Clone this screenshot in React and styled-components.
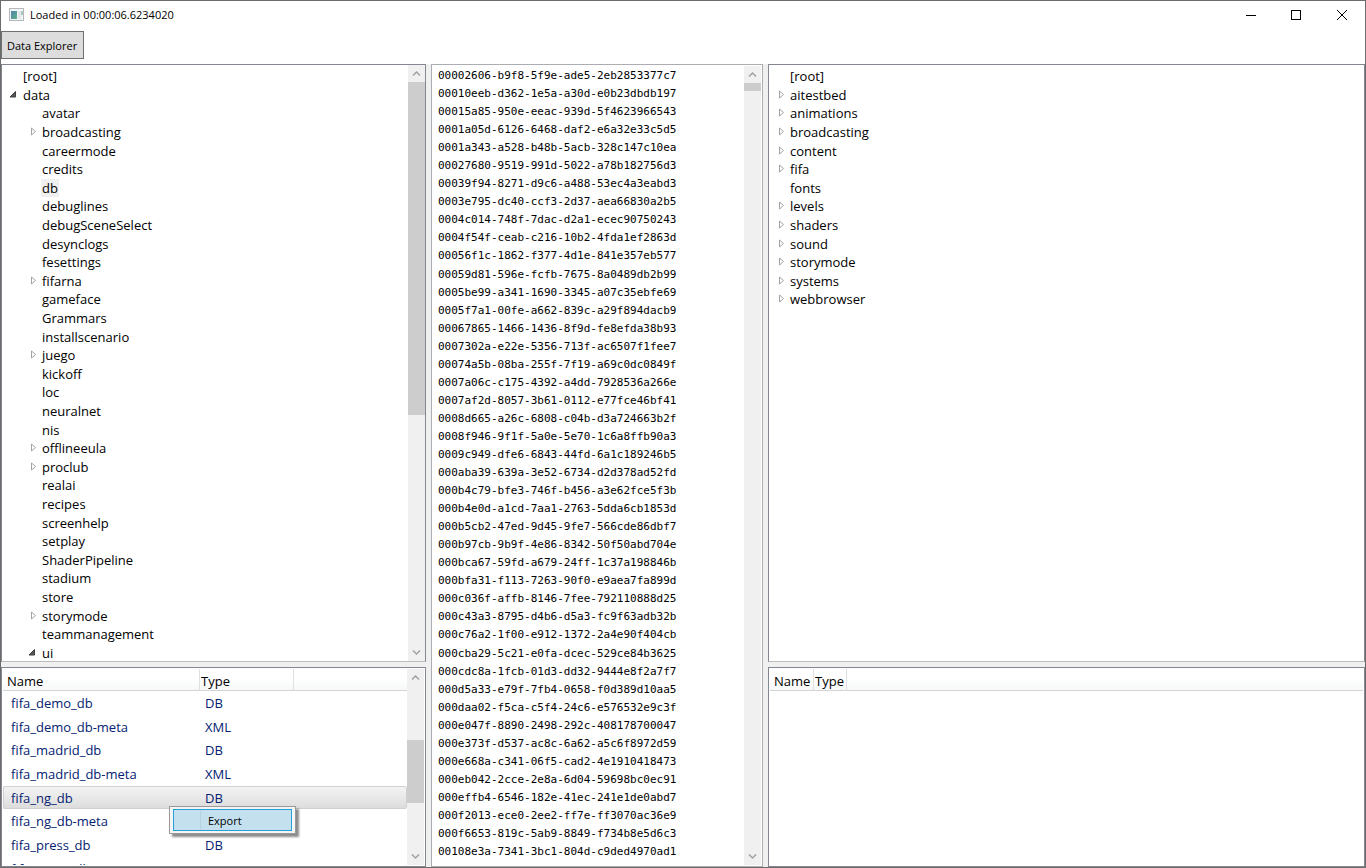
import React from "react";

import styled, { createGlobalStyle } from "styled-components";

const GlobalStyle = createGlobalStyle`
  * {
    box-sizing: border-box;
  }

  body {
    margin: 0;
    color: #000;
    background-color: #fff;
    font-family: "Open Sans", "Noto Sans", sans-serif;
    font-size: 13px;
    line-height: 18px;
  }

  button {
    margin: 0;
    padding: 0;
    border: none;
    background: none;
    color: inherit;
    font-family: inherit;
  }
`;

const Window = styled.div`
  display: flex;
  flex-direction: column;
  height: 100vh;
  border: 1px solid #6b6b6b;
  background-color: #fff;
`;

const TitleBar = styled.header`
  display: flex;
  align-items: center;
  flex: none;
  height: 28px;
  padding-left: 8px;

  svg {
    display: block;
  }

  h1 {
    flex: 1;
    margin: 0 0 0 5px;
    font-size: 11px;
    font-weight: 400;
  }
`;

const CaptionButton = styled.button`
  display: flex;
  align-items: center;
  justify-content: center;
  width: 46px;
  height: 28px;

  :hover {
    background-color: #e5e5e5;
  }
`;

const Toolbar = styled.div`
  flex: none;
  height: 35px;
  padding-top: 2px;
`;

const ToolButton = styled.button`
  display: block;
  height: 28px;
  padding: 1px 6px 0 5px;
  border: 1px solid #707070;
  background-color: #ddd;
  font-size: 11px;
  line-height: 18px;
`;

const Workspace = styled.main`
  display: grid;
  grid-template-columns: 425fr 332fr 597fr;
  grid-template-rows: 598fr 200fr;
  gap: 5px;
  flex: 1;
  min-height: 0;
  background-color: #f0f0f0;
`;

const Panel = styled.section`
  position: relative;
  display: flex;
  min-width: 0;
  min-height: 0;
  overflow: hidden;
  padding: ${props => (props.$inset ? "1px" : "0")};
  border: 1px solid ${props => (props.$light ? "#abadb3" : "#828790")};
  border-bottom-color: ${props => (props.$softBottom ? "#bcbcbc" : "")};
  background-color: #fff;
  grid-column: ${props => props.$column};
  grid-row: ${props => props.$row};
`;

const TreeList = styled.ul`
  display: grid;
  grid-template-rows: repeat(32, minmax(0, 1fr));
  flex: 1;
  margin: 0 0 -1px;
  padding: 2px 0 0 1px;
  list-style: none;
`;

const TreeItem = styled.li`
  display: flex;
  align-items: center;
  padding-left: ${props => props.$depth * 19}px;
`;

const Expander = styled.span`
  display: flex;
  flex: none;
  width: 19px;
  padding-left: ${props => (props.$open ? "6px" : "9px")};
`;

const TreeLabel = styled.span`
  padding: 0 1px;
  background-color: ${props => (props.$selected ? "#f0f0f0" : "transparent")};
`;

const GuidList = styled.ul`
  display: flex;
  flex-direction: column;
  flex: 1;
  margin: 0;
  padding: 1px 0 4px 5px;
  list-style: none;
  font-family: "DejaVu Sans Mono", "Liberation Mono", monospace;
  font-size: 11px;

  li {
    flex: 1 1 18px;
    white-space: nowrap;
  }
`;

const ScrollTrack = styled.div`
  display: grid;
  grid-template-rows: 17px ${props => props.$before}fr ${props => props.$thumb}fr ${props => props.$after}fr 17px;
  flex: none;
  width: 17px;
  background-color: #f0f0f0;

  button {
    display: flex;
    align-items: center;
    justify-content: center;
  }
`;

const ScrollThumb = styled.div`
  grid-row: 3;
  background-color: #cdcdcd;
`;

const ScrollDown = styled.button`
  grid-row: 5;
`;

const TableArea = styled.div`
  flex: 1;
  min-width: 0;
  overflow: hidden;
`;

const FileTable = styled.table`
  width: 100%;
  table-layout: fixed;
  border-collapse: separate;
  border-spacing: 0;

  th {
    height: 22px;
    padding: 2px 0 0 1px;
    border-right: 1px solid #e0e0e0;
    border-bottom: 1px solid #d5d5d5;
    background: linear-gradient(#fff 40%, #f7f8f9);
    font-weight: 400;
    text-align: left;
  }

  th:first-child {
    padding-left: 4px;
  }

  th:last-child {
    border-right: none;
  }

  td {
    height: 24px;
    padding: 0 0 0 5px;
    border-top: 1px solid transparent;
    border-bottom: 1px solid transparent;
    color: #042271;
    white-space: nowrap;
  }

  tr:nth-child(3n + 2) td {
    height: 23px;
  }

  td:first-child {
    padding-left: 7px;
  }
`;

const FileRow = styled.tr`
  td {
    border-color: ${props => (props.$selected ? "#d0d0d0" : "transparent")};
    background: ${props => (props.$selected ? "linear-gradient(#f3f3f3, #e9e9e9 50%, #dcdcdc)" : "none")};
  }

  td:first-child {
    border-left: 1px solid ${props => (props.$selected ? "#d0d0d0" : "transparent")};
    border-radius: 2px 0 0 2px;
  }

  td:last-child {
    border-right: 1px solid ${props => (props.$selected ? "#d0d0d0" : "transparent")};
    border-radius: 0 2px 2px 0;
  }
`;

const Column = styled.col`
  width: ${props => props.$width}px;
`;

const ContextMenu = styled.div`
  position: absolute;
  top: 138px;
  left: 167px;
  width: 127px;
  padding: 2px 3px;
  border: 1px solid #999;
  background-color: #f5f5f5;
  box-shadow: 3px 3px 2px rgba(0, 0, 0, 0.45);
`;

const MenuItem = styled.button`
  display: flex;
  align-items: center;
  width: 100%;
  height: 22px;
  border: 1px solid #26a0da;
  background-color: #c4e0ee;
  font-size: 11px;
`;

const MenuGutter = styled.span`
  width: 27px;
  height: 20px;
  margin-right: 7px;
  border-right: 1px solid #b4d4e4;
`;

const dataTree = [
  { name: "[root]", depth: 0 },
  { name: "data", depth: 0, state: "open" },
  { name: "avatar", depth: 1 },
  { name: "broadcasting", depth: 1, state: "closed" },
  { name: "careermode", depth: 1 },
  { name: "credits", depth: 1 },
  { name: "db", depth: 1, selected: true },
  { name: "debuglines", depth: 1 },
  { name: "debugSceneSelect", depth: 1 },
  { name: "desynclogs", depth: 1 },
  { name: "fesettings", depth: 1 },
  { name: "fifarna", depth: 1, state: "closed" },
  { name: "gameface", depth: 1 },
  { name: "Grammars", depth: 1 },
  { name: "installscenario", depth: 1 },
  { name: "juego", depth: 1, state: "closed" },
  { name: "kickoff", depth: 1 },
  { name: "loc", depth: 1 },
  { name: "neuralnet", depth: 1 },
  { name: "nis", depth: 1 },
  { name: "offlineeula", depth: 1, state: "closed" },
  { name: "proclub", depth: 1, state: "closed" },
  { name: "realai", depth: 1 },
  { name: "recipes", depth: 1 },
  { name: "screenhelp", depth: 1 },
  { name: "setplay", depth: 1 },
  { name: "ShaderPipeline", depth: 1 },
  { name: "stadium", depth: 1 },
  { name: "store", depth: 1 },
  { name: "storymode", depth: 1, state: "closed" },
  { name: "teammanagement", depth: 1 },
  { name: "ui", depth: 1, state: "open" }
];

const bundleTree = [
  { name: "[root]", depth: 0 },
  { name: "aitestbed", depth: 0, state: "closed" },
  { name: "animations", depth: 0, state: "closed" },
  { name: "broadcasting", depth: 0, state: "closed" },
  { name: "content", depth: 0, state: "closed" },
  { name: "fifa", depth: 0, state: "closed" },
  { name: "fonts", depth: 0 },
  { name: "levels", depth: 0, state: "closed" },
  { name: "shaders", depth: 0, state: "closed" },
  { name: "sound", depth: 0, state: "closed" },
  { name: "storymode", depth: 0, state: "closed" },
  { name: "systems", depth: 0, state: "closed" },
  { name: "webbrowser", depth: 0, state: "closed" }
];

const guids = [
  "00002606-b9f8-5f9e-ade5-2eb2853377c7",
  "00010eeb-d362-1e5a-a30d-e0b23dbdb197",
  "00015a85-950e-eeac-939d-5f4623966543",
  "0001a05d-6126-6468-daf2-e6a32e33c5d5",
  "0001a343-a528-b48b-5acb-328c147c10ea",
  "00027680-9519-991d-5022-a78b182756d3",
  "00039f94-8271-d9c6-a488-53ec4a3eabd3",
  "0003e795-dc40-ccf3-2d37-aea66830a2b5",
  "0004c014-748f-7dac-d2a1-ecec90750243",
  "0004f54f-ceab-c216-10b2-4fda1ef2863d",
  "00056f1c-1862-f377-4d1e-841e357eb577",
  "00059d81-596e-fcfb-7675-8a0489db2b99",
  "0005be99-a341-1690-3345-a07c35ebfe69",
  "0005f7a1-00fe-a662-839c-a29f894dacb9",
  "00067865-1466-1436-8f9d-fe8efda38b93",
  "0007302a-e22e-5356-713f-ac6507f1fee7",
  "00074a5b-08ba-255f-7f19-a69c0dc0849f",
  "0007a06c-c175-4392-a4dd-7928536a266e",
  "0007af2d-8057-3b61-0112-e77fce46bf41",
  "0008d665-a26c-6808-c04b-d3a724663b2f",
  "0008f946-9f1f-5a0e-5e70-1c6a8ffb90a3",
  "0009c949-dfe6-6843-44fd-6a1c189246b5",
  "000aba39-639a-3e52-6734-d2d378ad52fd",
  "000b4c79-bfe3-746f-b456-a3e62fce5f3b",
  "000b4e0d-a1cd-7aa1-2763-5dda6cb1853d",
  "000b5cb2-47ed-9d45-9fe7-566cde86dbf7",
  "000b97cb-9b9f-4e86-8342-50f50abd704e",
  "000bca67-59fd-a679-24ff-1c37a198846b",
  "000bfa31-f113-7263-90f0-e9aea7fa899d",
  "000c036f-affb-8146-7fee-792110888d25",
  "000c43a3-8795-d4b6-d5a3-fc9f63adb32b",
  "000c76a2-1f00-e912-1372-2a4e90f404cb",
  "000cba29-5c21-e0fa-dcec-529ce84b3625",
  "000cdc8a-1fcb-01d3-dd32-9444e8f2a7f7",
  "000d5a33-e79f-7fb4-0658-f0d389d10aa5",
  "000daa02-f5ca-c5f4-24c6-e576532e9c3f",
  "000e047f-8890-2498-292c-408178700047",
  "000e373f-d537-ac8c-6a62-a5c6f8972d59",
  "000e668a-c341-06f5-cad2-4e1910418473",
  "000eb042-2cce-2e8a-6d04-59698bc0ec91",
  "000effb4-6546-182e-41ec-241e1de0abd7",
  "000f2013-ece0-2ee2-ff7e-ff3070ac36e9",
  "000f6653-819c-5ab9-8849-f734b8e5d6c3",
  "00108e3a-7341-3bc1-804d-c9ded4970ad1"
];

const files = [
  { name: "fifa_demo_db", type: "DB" },
  { name: "fifa_demo_db-meta", type: "XML" },
  { name: "fifa_madrid_db", type: "DB" },
  { name: "fifa_madrid_db-meta", type: "XML" },
  { name: "fifa_ng_db", type: "DB", selected: true },
  { name: "fifa_ng_db-meta", type: "XML" },
  { name: "fifa_press_db", type: "DB" },
  { name: "fifa_press_db-meta", type: "XML" }
];

const AppIcon = () => (
  <svg width="16" height="16" viewBox="0 0 16 16" aria-hidden="true">
    <defs>
      <linearGradient id="pane" x1="0" y1="0" x2="1" y2="1">
        <stop offset="0" stopColor="#4f86ad" />
        <stop offset="1" stopColor="#5fae86" />
      </linearGradient>
    </defs>
    <rect x="0.5" y="1.5" width="14" height="12" fill="#f4f5f6" stroke="#b4b7bb" />
    <rect x="2" y="4" width="6" height="8" fill="url(#pane)" />
    <rect x="9" y="4" width="3" height="8" fill="#e3e6e9" />
    <rect x="12" y="4" width="2" height="4" fill="#a9cbbd" />
  </svg>
);

const Chevron = ({ down }) => (
  <svg width="9" height="7" viewBox="0 0 9 7" fill="none" stroke="#a0a0a0" strokeWidth="1.5" aria-hidden="true">
    <path d={down ? "M1 1.5 L4.5 5 L8 1.5" : "M1 5.5 L4.5 2 L8 5.5"} />
  </svg>
);

const Arrow = ({ state }) => {
  if (state === "open") {
    return (
      <svg width="8" height="8" viewBox="0 0 8 8" aria-hidden="true">
        <path d="M6.5 0.5 V6 H1 Z" fill="#595959" stroke="#404040" />
      </svg>
    );
  }

  return (
    <svg width="6" height="10" viewBox="0 0 6 10" aria-hidden="true">
      <path d="M0.5 1 V8 L4.5 4.5 Z" fill="#fff" stroke="#a3a3a3" />
    </svg>
  );
};

const Tree = ({ items, label }) => (
  <TreeList aria-label={label}>
    {items.map(item => (
      <TreeItem key={item.name} $depth={item.depth}>
        <Expander $open={item.state === "open"}>{item.state && <Arrow state={item.state} />}</Expander>
        <TreeLabel $selected={item.selected}>{item.name}</TreeLabel>
      </TreeItem>
    ))}
  </TreeList>
);

const ScrollBar = ({ before, thumb, after }) => (
  <ScrollTrack $before={before} $thumb={thumb} $after={after}>
    <button type="button" aria-label="Scroll up">
      <Chevron />
    </button>
    <ScrollThumb />
    <ScrollDown type="button" aria-label="Scroll down">
      <Chevron down />
    </ScrollDown>
  </ScrollTrack>
);

const Files = ({ rows, nameWidth, typeWidth }) => (
  <TableArea>
    <FileTable>
      <colgroup>
        <Column $width={nameWidth} />
        <Column $width={typeWidth} />
        <col />
      </colgroup>
      <thead>
        <tr>
          <th>Name</th>
          <th>Type</th>
          <th aria-hidden="true" />
        </tr>
      </thead>
      <tbody>
        {rows.map(row => (
          <FileRow key={row.name} $selected={row.selected}>
            <td>{row.name}</td>
            <td>{row.type}</td>
            <td />
          </FileRow>
        ))}
      </tbody>
    </FileTable>
  </TableArea>
);

const App = () => (
  <>
    <GlobalStyle />
    <Window>
      <TitleBar>
        <AppIcon />
        <h1>Loaded in 00:00:06.6234020</h1>
        <CaptionButton type="button" aria-label="Minimize">
          <svg width="12" height="12" viewBox="0 0 12 12" stroke="#000">
            <path d="M2 6.5 H12" />
          </svg>
        </CaptionButton>
        <CaptionButton type="button" aria-label="Maximize">
          <svg width="12" height="12" viewBox="0 0 12 12" fill="none" stroke="#000">
            <rect x="1.5" y="1.5" width="9" height="9" />
          </svg>
        </CaptionButton>
        <CaptionButton type="button" aria-label="Close">
          <svg width="12" height="12" viewBox="0 0 12 12" stroke="#000">
            <path d="M1 1 L11 11 M11 1 L1 11" />
          </svg>
        </CaptionButton>
      </TitleBar>
      <Toolbar>
        <ToolButton type="button">Data Explorer</ToolButton>
      </Toolbar>
      <Workspace>
        <Panel $column="1" $row="1" $softBottom>
          <Tree items={dataTree} label="Data" />
          <ScrollBar before={0} thumb={333} after={229} />
        </Panel>
        <Panel $column="1" $row="2" $inset>
          <Files rows={files} nameWidth={197} typeWidth={94} />
          <ScrollBar before={54} thumb={63} after={45} />
          <ContextMenu>
            <MenuItem type="button">
              <MenuGutter />
              Export
            </MenuItem>
          </ContextMenu>
        </Panel>
        <Panel $column="2" $row="1 / 3" $light $inset>
          <GuidList>
            {guids.map(guid => (
              <li key={guid}>{guid}</li>
            ))}
          </GuidList>
          <ScrollBar before={0} thumb={8} after={757} />
        </Panel>
        <Panel $column="3" $row="1" $softBottom>
          <Tree items={bundleTree} label="Bundles" />
        </Panel>
        <Panel $column="3" $row="2" $inset>
          <Files rows={[]} nameWidth={44} typeWidth={33} />
        </Panel>
      </Workspace>
    </Window>
  </>
);

export default App;
